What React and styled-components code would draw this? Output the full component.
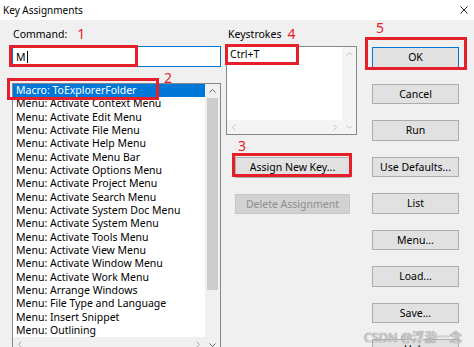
import React from 'react'
import styled, { createGlobalStyle } from 'styled-components'

const RED = '#e5202a'

const GlobalStyle = createGlobalStyle`
  html, body { margin: 0; padding: 0; }
  body {
    background: #f0f0f0;
    font-family: "Noto Sans", "Liberation Sans", sans-serif;
  }
`

const Window = styled.div`
  position: relative;
  width: 474px;
  height: 347px;
  overflow: hidden;
  display: flex;
  flex-direction: column;
  background: #f0f0f0;
  color: #000;
  font-size: 10.5px;
`

const TitleBar = styled.div`
  flex: none;
  height: 20px;
  background: #fff;
  display: flex;
  align-items: center;
  justify-content: space-between;
  padding: 0 6px 0 3px;
  font-size: 10px;
`

const Body = styled.div`
  flex: 1;
  display: flex;
  padding: 7px 0 0 12px;
`

const Column = styled.div`
  flex: none;
  width: ${p => p.$width}px;
  margin-left: ${p => p.$offset || 0}px;
  display: flex;
  flex-direction: column;
`

const Label = styled.div`
  height: 14px;
  line-height: 14px;
  display: flex;
  align-items: center;
  padding-left: ${p => p.$indent || 1}px;
`

const Num = styled.span`
  color: ${RED};
  font-size: 14px;
  line-height: 14px;
  margin-left: ${p => p.$gap || 0}px;
`

const NumRow = styled.div`
  height: 22px;
  line-height: 22px;
  padding-left: 12px;
  color: ${RED};
  font-size: 14px;
`

const Annotated = styled.div`
  position: relative;
  margin-top: ${p => p.$top || 0}px;
  margin-left: ${p => p.$left || 0}px;
`

const RedFrame = styled.div`
  position: absolute;
  left: ${p => p.$x}px;
  top: ${p => p.$y}px;
  width: ${p => p.$w}px;
  height: ${p => p.$h}px;
  border: 3px solid ${RED};
  box-sizing: border-box;
  pointer-events: none;
`

const FloatNum = styled.span`
  position: absolute;
  left: ${p => p.$x}px;
  top: ${p => p.$y}px;
  color: ${RED};
  font-size: 14px;
  line-height: 14px;
`

const TextBox = styled.div`
  box-sizing: border-box;
  height: 21px;
  background: #fff;
  border: 1px solid #0078d7;
  padding-left: 3px;
  display: flex;
  align-items: center;
  font-size: 10.5px;
`

const Caret = styled.span`
  display: inline-block;
  width: 1px;
  height: 12px;
  margin-left: 1px;
  background: #000;
`

const ListBox = styled.div`
  box-sizing: border-box;
  height: ${p => p.$height}px;
  background: #fff;
  border: 1px solid #828790;
  display: grid;
  grid-template-columns: 1fr ${p => p.$bar}px;
  grid-template-rows: 1fr ${p => p.$bar}px;
`

const Items = styled.div`
  overflow: hidden;
  padding-top: ${p => p.$pad || 0}px;
`

const Item = styled.div`
  height: 13.33px;
  line-height: 13.33px;
  padding-left: 3px;
  white-space: nowrap;
  background: ${p => (p.$selected ? '#0078d7' : 'transparent')};
  color: ${p => (p.$selected ? '#fff' : '#000')};
`

const VScroll = styled.div`
  grid-row: 1 / 3;
  grid-column: 2;
  background: ${p => (p.$disabled ? '#f4f4f4' : '#f0f0f0')};
  display: flex;
  flex-direction: column;
`

const HScroll = styled.div`
  grid-row: 2;
  grid-column: 1;
  background: ${p => (p.$disabled ? '#f4f4f4' : '#f0f0f0')};
  display: flex;
  justify-content: space-between;
  align-items: center;
`

const ArrowCell = styled.div`
  flex: none;
  width: ${p => p.$size}px;
  height: ${p => p.$size}px;
  display: flex;
  align-items: center;
  justify-content: center;
  margin-top: ${p => (p.$push ? 'auto' : '0')};
`

const Thumb = styled.div`
  height: ${p => p.$length}px;
  margin: 0 2px;
  background: #cdcdcd;
`

const Buttons = styled.div`
  display: grid;
  grid-auto-rows: 20.5px;
  row-gap: 16px;
  padding-top: ${p => p.$top || 0}px;
  width: ${p => p.$width}px;
  margin-left: ${p => p.$left || 0}px;
`

const Button = styled.button`
  box-sizing: border-box;
  height: 20.5px;
  width: 100%;
  padding: 0;
  margin: 0;
  font: inherit;
  color: #000;
  background: #e1e1e1;
  border: 1px solid ${p => (p.$default ? '#0078d7' : '#adadad')};
  &:disabled {
    background: #d2d2d2;
    border-color: #c6c6c6;
    color: #8e8e8e;
  }
`

const Watermark = styled.div`
  position: absolute;
  right: 12px;
  bottom: 2px;
  font-family: "Noto Sans", "Noto Sans CJK SC", sans-serif;
  font-size: 12.5px;
  line-height: 14px;
  color: #d4d4d4;
  text-shadow: 0 0 1px #7a7a7a, 0 0 1px #9a9a9a;
`

const Chevron = ({ dir, color = '#606060' }) => {
  const pts = {
    up: '0.5,4.5 3.5,1.5 6.5,4.5',
    down: '0.5,1.5 3.5,4.5 6.5,1.5',
    left: '4.5,0.5 1.5,3.5 4.5,6.5',
    right: '1.5,0.5 4.5,3.5 1.5,6.5',
  }[dir]
  const vertical = dir === 'up' || dir === 'down'
  return (
    <svg width={vertical ? 7 : 6} height={vertical ? 6 : 7}>
      <polyline points={pts} fill="none" stroke={color} strokeWidth="1" />
    </svg>
  )
}

const commands = [
  'Macro: ToExplorerFolder',
  'Menu: Activate Context Menu',
  'Menu: Activate Edit Menu',
  'Menu: Activate File Menu',
  'Menu: Activate Help Menu',
  'Menu: Activate Menu Bar',
  'Menu: Activate Options Menu',
  'Menu: Activate Project Menu',
  'Menu: Activate Search Menu',
  'Menu: Activate System Doc Menu',
  'Menu: Activate System Menu',
  'Menu: Activate Tools Menu',
  'Menu: Activate View Menu',
  'Menu: Activate Window Menu',
  'Menu: Activate Work Menu',
  'Menu: Arrange Windows',
  'Menu: File Type and Language',
  'Menu: Insert Snippet',
  'Menu: Outlining',
]

const sideButtons = ['Cancel', 'Run', 'Use Defaults...', 'List', 'Menu...', 'Load...', 'Save...', 'Help']

const App = () => {
  return (
    <Window>
      <GlobalStyle />
      <TitleBar>
        <span>Key Assignments</span>
        <svg width="8" height="8">
          <path d="M0.5 0.5 L7.5 7.5 M7.5 0.5 L0.5 7.5" stroke="#222" strokeWidth="1" />
        </svg>
      </TitleBar>
      <Body>
        <Column $width={209}>
          <Label>
            Command:
            <Num $gap={10}>1</Num>
          </Label>
          <Annotated $top={5}>
            <TextBox>
              M<Caret />
            </TextBox>
            <RedFrame $x={-3} $y={-1} $w={129} $h={22} />
          </Annotated>
          <Annotated $top={16}>
            <ListBox $height={270} $bar={15}>
              <Items>
                {commands.map((c, i) => (
                  <Item key={c} $selected={i === 0}>{c}</Item>
                ))}
              </Items>
              <VScroll>
                <ArrowCell $size={14}><Chevron dir="up" /></ArrowCell>
                <Thumb $length={192} />
                <ArrowCell $size={14} $push><Chevron dir="down" /></ArrowCell>
              </VScroll>
              <HScroll>
                <ArrowCell $size={14}><Chevron dir="left" color="#a6a6a6" /></ArrowCell>
                <ArrowCell $size={14}><Chevron dir="right" color="#a6a6a6" /></ArrowCell>
              </HScroll>
            </ListBox>
            <RedFrame $x={-5} $y={-5} $w={152} $h={22} />
            <FloatNum $x={152} $y={-12}>2</FloatNum>
          </Annotated>
        </Column>

        <Column $width={131} $offset={5}>
          <Label $indent={2}>
            Keystrokes
            <Num $gap={6}>4</Num>
          </Label>
          <Annotated $top={5}>
            <ListBox $height={89} $bar={14}>
              <Items $pad={1}>
                <Item>Ctrl+T</Item>
              </Items>
              <VScroll $disabled>
                <ArrowCell $size={14}><Chevron dir="up" color="#c4c4c4" /></ArrowCell>
                <ArrowCell $size={14} $push><Chevron dir="down" color="#c4c4c4" /></ArrowCell>
              </VScroll>
              <HScroll $disabled>
                <ArrowCell $size={14}><Chevron dir="left" color="#c4c4c4" /></ArrowCell>
                <ArrowCell $size={14}><Chevron dir="right" color="#c4c4c4" /></ArrowCell>
              </HScroll>
            </ListBox>
            <RedFrame $x={-1} $y={-2} $w={74} $h={21} />
          </Annotated>
          <NumRow>3</NumRow>
          <Buttons $width={115} $left={9}>
            <Annotated>
              <Button>Assign New Key...</Button>
              <RedFrame $x={-3} $y={-4} $w={120} $h={24} />
            </Annotated>
            <Button disabled>Delete Assignment</Button>
          </Buttons>
        </Column>

        <Buttons $width={87} $left={15} $top={20}>
          <Annotated>
            <Button $default>OK</Button>
            <RedFrame $x={-7} $y={-10} $w={102} $h={33} />
            <FloatNum $x={4} $y={-26}>5</FloatNum>
          </Annotated>
          {sideButtons.map(b => (
            <Button key={b}>{b}</Button>
          ))}
        </Buttons>
      </Body>
      <Watermark>CSDN @浮游一念</Watermark>
    </Window>
  )
}

export default App
